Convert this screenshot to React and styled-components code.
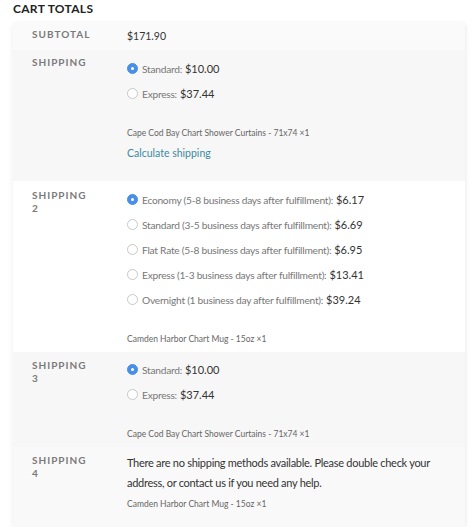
import React from "react";
import styled, { createGlobalStyle } from "styled-components";

const Global = createGlobalStyle`
  html, body { margin: 0; padding: 0; background: #fff; }
  body { font-family: Lato, "Open Sans", sans-serif; color: #333; -webkit-font-smoothing: antialiased; }
`;

const Page = styled.div`
  padding: 1px 9px 0 13px;
`;

const Title = styled.h2`
  margin: 0;
  font-size: 12px;
  font-weight: 700;
  letter-spacing: 0.3px;
  line-height: 16px;
  color: #222;
  text-transform: uppercase;
`;

const Card = styled.div`
  margin-top: 5px;
  box-shadow: 0 3px 6px rgba(0, 0, 0, 0.07), 1px 0 3px rgba(0, 0, 0, 0.03);
`;

const Row = styled.div`
  display: grid;
  grid-template-columns: 114px 1fr;
  background: ${(p) => p.$bg};
  padding-bottom: ${(p) => p.$pb || "0"};
  min-height: ${(p) => p.$minh || "0"};
  box-sizing: border-box;
`;

const Label = styled.div`
  padding-left: 19px;
  padding-top: ${(p) => p.$top || "6px"};
  font-size: 10px;
  font-weight: 700;
  letter-spacing: 1px;
  line-height: 13px;
  color: #7a7a7a;
  text-transform: uppercase;
`;

const Cell = styled.div`
  padding-top: ${(p) => p.$top || "6px"};
  padding-right: ${(p) => p.$right || "0"};
`;

const Value = styled.div`
  font-size: 10.5px;
  line-height: 14px;
  color: #333;
`;

const Options = styled.ul`
  list-style: none;
  margin: 0;
  padding: 0;
`;

const Option = styled.li`
  display: flex;
  align-items: center;
  height: 25px;
  font-size: 10.2px;
  letter-spacing: -0.25px;
  color: #777;
`;

const Radio = styled.span`
  width: 11px;
  height: 11px;
  box-sizing: border-box;
  border-radius: 50%;
  margin-right: 4px;
  flex: none;
  background: ${(p) => (p.$checked ? "#4a8fe7" : "#fff")};
  border: 1px solid ${(p) => (p.$checked ? "#4a8fe7" : "#c8c8c8")};
  display: flex;
  align-items: center;
  justify-content: center;
  &::after {
    content: "";
    width: 3px;
    height: 3px;
    border-radius: 50%;
    background: ${(p) => (p.$checked ? "#fff" : "transparent")};
  }
`;

const Price = styled.span`
  color: #333;
  font-size: 11px;
  letter-spacing: 0;
  margin-left: 3px;
`;

const Product = styled.p`
  margin: ${(p) => p.$mt || "20px"} 0 0;
  font-size: 8.5px;
  line-height: 14px;
  color: #666;
`;

const Calc = styled.a`
  display: block;
  margin-top: 3px;
  font-size: 10.5px;
  line-height: 20px;
  color: #3d8a9f;
  text-decoration: none;
`;

const Notice = styled.p`
  margin: 0;
  font-size: 11px;
  letter-spacing: -0.28px;
  line-height: 20px;
  color: #333;
`;

const OptionList = ({ items }) => (
  <Options>
    {items.map((it, i) => (
      <Option key={i}>
        <Radio $checked={i === 0} />
        {it[0]}
        <Price>{it[1]}</Price>
      </Option>
    ))}
  </Options>
);

const basic = [
  ["Standard:", "$10.00"],
  ["Express:", "$37.44"],
];

const many = [
  ["Economy (5-8 business days after fulfillment):", "$6.17"],
  ["Standard (3-5 business days after fulfillment):", "$6.69"],
  ["Flat Rate (5-8 business days after fulfillment):", "$6.95"],
  ["Express (1-3 business days after fulfillment):", "$13.41"],
  ["Overnight (1 business day after fulfillment):", "$39.24"],
];

export default function App() {
  return (
    <Page>
      <Global />
      <Title>Cart Totals</Title>
      <Card>
        <Row $bg="#fafafa" $minh="28px">
          <Label $top="6px">Subtotal</Label>
          <Cell $top="7px">
            <Value>$171.90</Value>
          </Cell>
        </Row>
        <Row $bg="#f7f7f7" $pb="18px">
          <Label>Shipping</Label>
          <Cell $top="6px">
            <OptionList items={basic} />
            <Product>Cape Cod Bay Chart Shower Curtains - 71x74 ×1</Product>
            <Calc href="#">Calculate shipping</Calc>
          </Cell>
        </Row>
        <Row $bg="#ffffff" $pb="6px">
          <Label $top="8px">
            Shipping
            <br />2
          </Label>
          <Cell $top="6px">
            <OptionList items={many} />
            <Product>Camden Harbor Chart Mug - 15oz ×1</Product>
          </Cell>
        </Row>
        <Row $bg="#f7f7f7" $pb="6px">
          <Label $top="7px">
            Shipping
            <br />3
          </Label>
          <Cell $top="5px">
            <OptionList items={basic} />
            <Product>Cape Cod Bay Chart Shower Curtains - 71x74 ×1</Product>
          </Cell>
        </Row>
        <Row $bg="#f9f9f9" $pb="16px">
          <Label $top="7px">
            Shipping
            <br />4
          </Label>
          <Cell $top="6px" $right="20px">
            <Notice>
              There are no shipping methods available. Please double check your address, or contact us if you need any help.
            </Notice>
            <Product $mt="4px">Camden Harbor Chart Mug - 15oz ×1</Product>
          </Cell>
        </Row>
      </Card>
    </Page>
  );
}
